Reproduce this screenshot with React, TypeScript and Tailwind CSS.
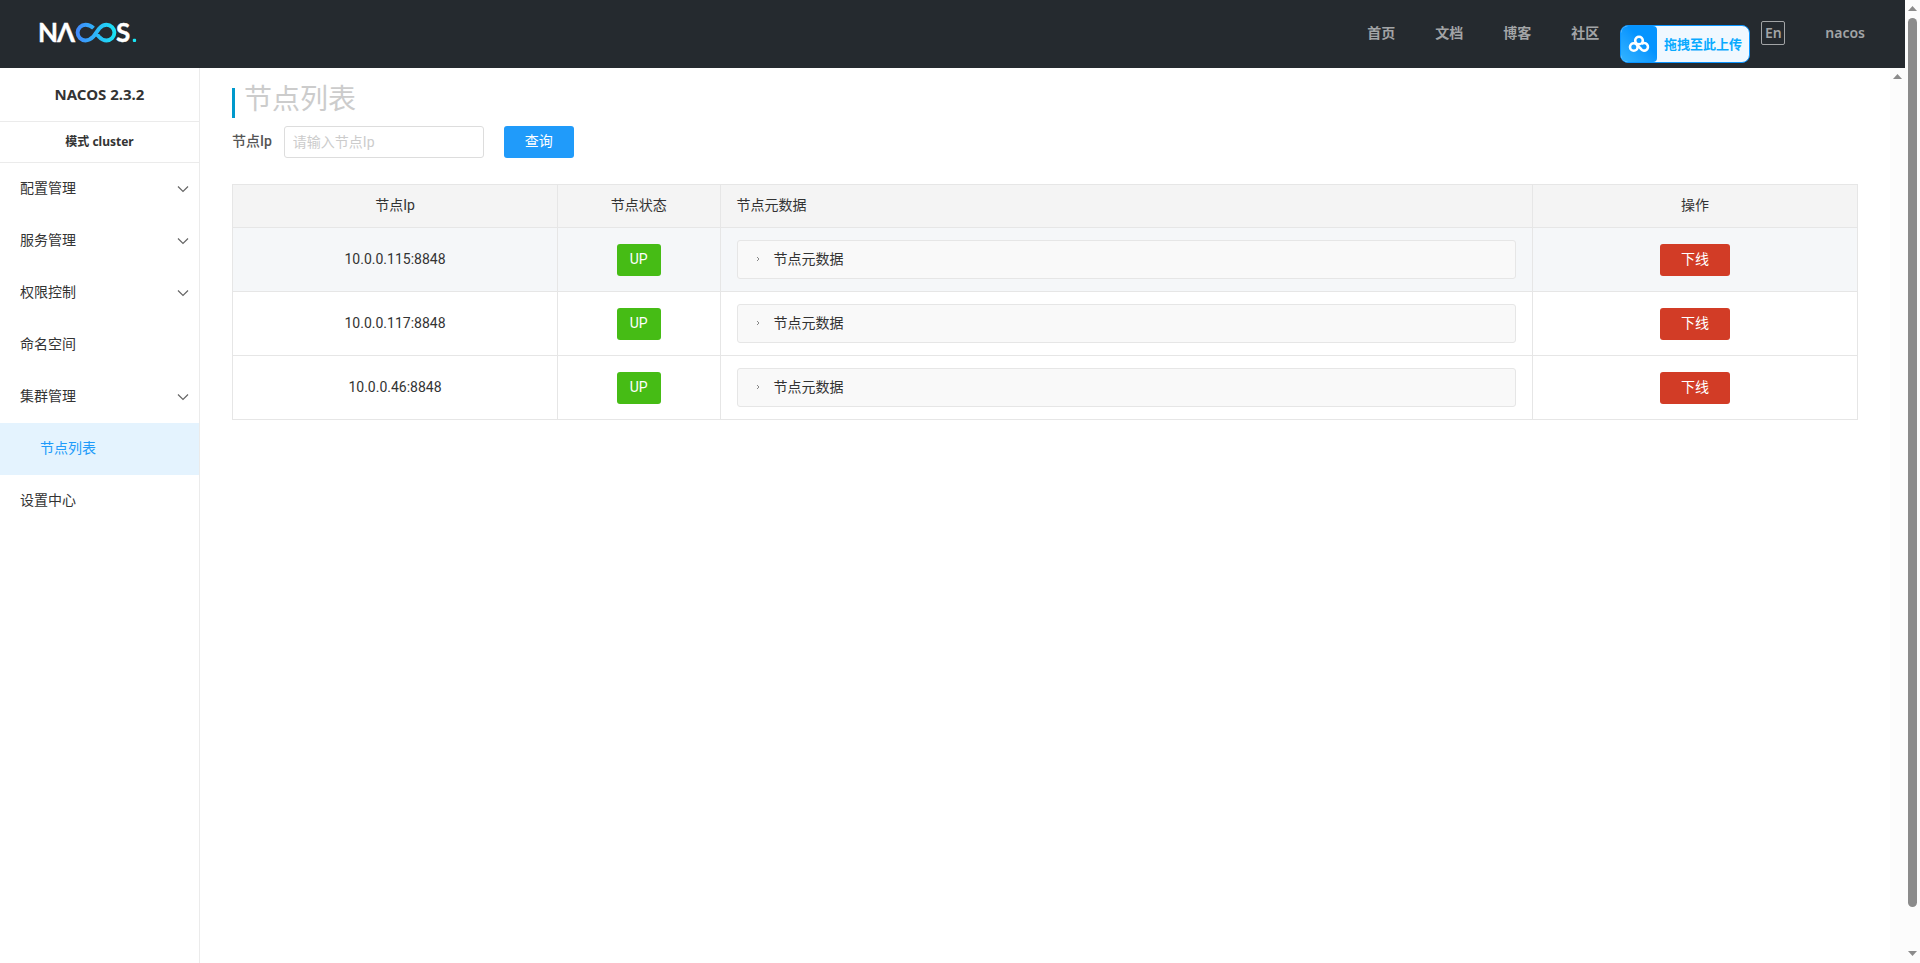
import React from "react";

const sans = "font-['Roboto','Noto_Sans_CJK_SC',sans-serif]";
const heading = "font-['Noto_Sans','Noto_Sans_CJK_SC',sans-serif]";

type MenuEntry = { label: string; expandable?: boolean; child?: boolean; active?: boolean };

const navLinks = ["首页", "文档", "博客", "社区"];

const menu: MenuEntry[] = [
  { label: "配置管理", expandable: true },
  { label: "服务管理", expandable: true },
  { label: "权限控制", expandable: true },
  { label: "命名空间" },
  { label: "集群管理", expandable: true },
  { label: "节点列表", child: true, active: true },
  { label: "设置中心" },
];

const nodes = [
  { ip: "10.0.0.115:8848", state: "UP" },
  { ip: "10.0.0.117:8848", state: "UP" },
  { ip: "10.0.0.46:8848", state: "UP" },
];

function Logo() {
  return (
    <svg width="108" height="44" viewBox="-4 -10 108 44" role="img" aria-label="NACOS">
      <defs>
        <linearGradient id="loop" gradientUnits="userSpaceOnUse" x1="36" y1="0" x2="76" y2="0">
          <stop offset="0" stopColor="#4288fc" />
          <stop offset="1" stopColor="#19e5f5" />
        </linearGradient>
      </defs>
      <g fill="#fff" stroke="#fff" strokeWidth="0.4" fontFamily="Lato, sans-serif" fontWeight="700" fontSize="26">
        <text x="-2" y="21">N</text>
        <text x="17" y="21">Λ</text>
        <text x="76" y="21">S</text>
      </g>
      <path
        d="M53.500 7.200C51 4.700 48.500 3.700 45.500 3.700a7.900 7.900 0 0 0 0 15.800c3 0 5.300-1.300 7.800-3.800L59.200 7.500C61.500 5 63.700 3.700 66.500 3.700a7.900 7.900 0 0 1 0 15.800c-3 0-5.200-1.300-7.500-3.800L55.800 12"
        fill="none"
        stroke="url(#loop)"
        strokeWidth="3.900"
      />
      <rect x="92.800" y="17.700" width="3.300" height="3.300" rx="1" fill="#19e5f5" />
    </svg>
  );
}

function UploadBadge() {
  return (
    <button
      type="button"
      className="absolute top-[25px] right-[155px] flex h-[38px] w-[130px] items-center overflow-hidden rounded-lg border border-[#0a94ff] bg-[#f0f8ff]"
    >
      <span className="flex h-full w-9 shrink-0 items-center justify-center rounded-r bg-linear-to-tr from-[#32b4ff] to-[#0594ff] to-60%">
        <svg width="22" height="18" viewBox="0 0 22 18" fill="none" stroke="#fff" strokeWidth="2.600" aria-hidden="true">
          <circle cx="11" cy="5.500" r="3.800" />
          <circle cx="5.800" cy="12" r="3.800" />
          <path d="M8.600 9.400l4.600 4.800a3.800 3.800 0 1 0 .4-5.200" />
        </svg>
      </span>
      <span className="flex-1 text-center text-[13px] leading-5 font-bold text-[#09aaff]">拖拽至此上传</span>
    </button>
  );
}

function Header() {
  return (
    <header className={`relative flex h-[68px] shrink-0 items-center bg-[#252a2f] pr-10 pb-0.5 pl-9 ${heading}`}>
      <a href="#home">
        <Logo />
      </a>
      <nav className="ml-auto flex items-center gap-10 text-sm font-semibold text-[#a2a4a6]">
        {navLinks.map((label) => (
          <a key={label} href="#nav">
            {label}
          </a>
        ))}
        <button
          type="button"
          className="ml-[122px] flex size-6 items-center justify-center rounded-xs border border-[#a2a4a6]"
        >
          En
        </button>
        <a href="#user">nacos</a>
      </nav>
      <UploadBadge />
    </header>
  );
}

function Sidebar() {
  return (
    <aside className="flex w-[200px] shrink-0 flex-col border-r border-[#ebebeb] text-[#333]">
      <div className={`flex h-[54px] items-center justify-center border-b border-[#ebebeb] text-[15px] font-bold ${heading}`}>
        NACOS 2.3.2
      </div>
      <div className={`flex h-[41px] items-center justify-center border-b border-[#ebebeb] text-xs font-bold ${heading}`}>
        模式 cluster
      </div>
      <ul className="text-sm">
        {menu.map((item) => (
          <li key={item.label}>
            <a
              href="#menu"
              className={`flex h-[52px] items-center justify-between pr-[10px] pb-0.5 ${item.child ? "pl-10" : "pl-5"} ${
                item.active ? "bg-[#e4f3fe] text-[#209bfa]" : ""
              }`}
            >
              {item.label}
              {item.expandable && (
                <svg width="12" height="10" viewBox="0 0 12 10" fill="none" stroke="#666" strokeWidth="1.200" aria-hidden="true">
                  <path d="M1 3.500L6 8.500L11 3.500" />
                </svg>
              )}
            </a>
          </li>
        ))}
      </ul>
    </aside>
  );
}

function NodeTable() {
  const cell = "border border-[#e6e6e6] px-4";
  return (
    <table className="w-full table-fixed border-collapse text-sm text-[#333]">
      <colgroup>
        <col className="w-[20%]" />
        <col className="w-[10%]" />
        <col className="w-[50%]" />
        <col className="w-[20%]" />
      </colgroup>
      <thead>
        <tr className="h-[43px] bg-[#f4f4f4]">
          <th className={`${cell} pb-0.5 font-normal`}>节点Ip</th>
          <th className={`${cell} pb-0.5 font-normal`}>节点状态</th>
          <th className={`${cell} pb-0.5 text-left font-normal`}>节点元数据</th>
          <th className={`${cell} pb-0.5 font-normal`}>操作</th>
        </tr>
      </thead>
      <tbody>
        {nodes.map((node, i) => (
          <tr key={node.ip} className={`h-16 ${i === 0 ? "bg-[#f5f7f9]" : "bg-white"}`}>
            <td className={`${cell} pb-0.5 text-center`}>{node.ip}</td>
            <td className={`${cell} text-center`}>
              <span className="inline-flex h-8 w-11 items-center justify-center rounded-[3px] bg-[#46bc15] pb-0.5 align-middle text-white">
                {node.state}
              </span>
            </td>
            <td className={cell}>
              <button
                type="button"
                className="flex h-[39px] w-full items-center gap-[13px] rounded-[3px] border border-[#e6e6e6] bg-[#f9f9f9] pb-0.5 pl-[17px]"
              >
                <svg width="6" height="6" viewBox="0 0 6 6" fill="none" stroke="#888" aria-hidden="true">
                  <path d="M2 1L4 3L2 5" />
                </svg>
                节点元数据
              </button>
            </td>
            <td className={`${cell} text-center`}>
              <button type="button" className="h-8 w-[70px] rounded-[3px] bg-[#d23c26] pb-0.5 align-middle text-white">
                下线
              </button>
            </td>
          </tr>
        ))}
      </tbody>
    </table>
  );
}

function Arrow({ down = false }: { down?: boolean }) {
  return (
    <svg width="9" height="5" viewBox="0 0 9 5" fill="#8b8b8b" aria-hidden="true">
      <path d={down ? "M0 0H9L4.500 5Z" : "M0 5H9L4.500 0Z"} />
    </svg>
  );
}

export default function App() {
  return (
    <div className={`flex h-screen bg-white ${sans}`}>
      <div className="flex min-w-0 flex-1 flex-col">
        <Header />
        <div className="flex min-h-0 flex-1">
          <Sidebar />
          <main className="min-w-0 flex-1 px-8">
            <h1 className="mt-5 flex h-[30px] items-center border-l-3 border-[#09c] pl-[9px] text-[28px] text-[#ccc]">
              <span className="mb-1.5">节点列表</span>
            </h1>
            <form className="mt-2 mb-[26px] flex items-center" onSubmit={(e) => e.preventDefault()}>
              <label htmlFor="node-ip" className="mr-3 pb-0.5 text-sm font-medium text-[#555]">
                节点Ip
              </label>
              <input
                id="node-ip"
                type="text"
                placeholder="请输入节点Ip"
                className="h-8 w-[200px] rounded-[3px] border border-[#ddd] px-2 text-sm placeholder:text-[#ccc]"
              />
              <button type="submit" className="ml-5 h-8 w-[70px] rounded-[3px] bg-[#209bfa] pb-0.5 text-sm text-white">
                查询
              </button>
            </form>
            <NodeTable />
          </main>
          <div className="flex w-[15px] shrink-0 flex-col items-center bg-[#fcfcfc] pt-[6px]">
            <Arrow />
          </div>
        </div>
      </div>
      <div className="flex w-[15px] shrink-0 flex-col items-center bg-[#fcfcfc] pt-[6px] pb-[7px]">
        <Arrow />
        <div className="mt-[7px] mb-11 w-[9px] flex-1 rounded-full bg-[#8b8b8b]" />
        <Arrow down />
      </div>
    </div>
  );
}
